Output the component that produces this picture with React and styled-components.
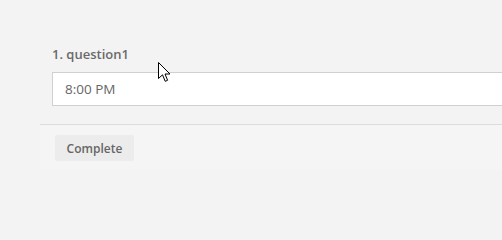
import React from "react";
import styled, { createGlobalStyle } from "styled-components";

const Global = createGlobalStyle`
  html, body {
    margin: 0;
    padding: 0;
    background: #f3f3f3;
    overflow: hidden;
  }
  body {
    font-family: "Open Sans", "Noto Sans", sans-serif;
  }
`;

const Page = styled.div`
  position: relative;
  width: 502px;
  height: 203px;
  padding-left: 40px;
  box-sizing: border-box;
  overflow: hidden;
`;

const Body = styled.div`
  padding: 44px 0 18px 12px;
`;

const Label = styled.div`
  font-size: 13px;
  font-weight: 600;
  color: #6a6a6a;
  line-height: 20px;
  margin-bottom: 8px;
`;

const Input = styled.div`
  width: 480px;
  height: 34px;
  box-sizing: border-box;
  background: #fff;
  border: 1px solid #d0d0d0;
  display: flex;
  align-items: center;
  padding-left: 12px;
  font-size: 13.5px;
  color: #666;
`;

const Footer = styled.div`
  border-top: 1px solid #dcdcdc;
  background: #f5f5f5;
  height: 46px;
  box-sizing: border-box;
  padding: 10px 15px;
  width: 520px;
`;

const Button = styled.div`
  display: inline-flex;
  align-items: center;
  justify-content: center;
  width: 79px;
  height: 26px;
  background: #ececec;
  border-radius: 2px;
  font-size: 12px;
  font-weight: 600;
  color: #666;
`;

const Cursor = styled.svg`
  position: absolute;
  left: 158px;
  top: 62px;
`;

export default function App() {
  return (
    <>
      <Global />
      <Page>
        <Body>
          <Label>1. question1</Label>
          <Input>8:00 PM</Input>
        </Body>
        <Footer>
          <Button>Complete</Button>
        </Footer>
        <Cursor width="13" height="21" viewBox="0 0 13 21">
          <path
            d="M0.5 0.5 L0.5 16.5 L4.5 12.8 L7.2 19.3 L9.6 18.3 L7 12 L12 12 Z"
            fill="#fff"
            stroke="#000"
            strokeWidth="1"
            strokeLinejoin="miter"
          />
        </Cursor>
      </Page>
    </>
  );
}
